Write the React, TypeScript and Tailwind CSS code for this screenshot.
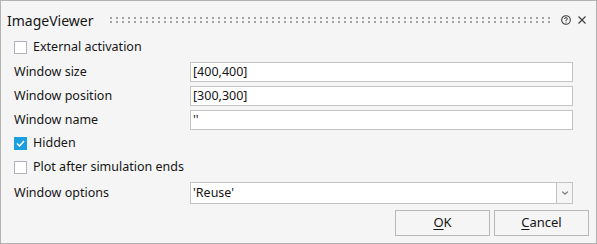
import React from 'react';

const font = "font-['Segoe_UI','Noto_Sans',Roboto,sans-serif]";

const CheckBox: React.FC<{ checked?: boolean; label: string }> = ({ checked, label }) => (
  <div className="flex items-center h-[24px]">
    {checked ? (
      <span className="w-[13px] h-[13px] bg-[#1aa0e0] flex items-center justify-center">
        <svg width="9" height="7" viewBox="0 0 9 7">
          <path d="M1 3.5 L3.5 6 L8 1" fill="none" stroke="#fff" strokeWidth="1.6" />
        </svg>
      </span>
    ) : (
      <span className="w-[13px] h-[13px] bg-white border border-[#aeb3bd]" />
    )}
    <span className="ml-[6px]">{label}</span>
  </div>
);

const Field: React.FC<{ label: string; value: string }> = ({ label, value }) => (
  <div className="flex items-center h-[24px] pt-[2px]">
    <span className="w-[176px]">{label}</span>
    <div className="flex-1 h-[20px] bg-white border border-[#c3c3c3] flex items-center px-[2px]">{value}</div>
  </div>
);

const App: React.FC = () => {
  return (
    <div className={`w-[597px] h-[244px] bg-[#f5f5f5] border border-[#b2b2b2] flex flex-col text-[12.5px] text-[#161616] ${font}`}>
      {/* Title bar */}
      <div className="h-[34px] flex items-center pl-[6px] pr-[10px] pt-[4px]">
        <span className="text-[14px]">ImageViewer</span>
        <div className="flex-1 ml-[16px] h-[6px]">
          <svg className="w-full h-[6px] block">
            <defs>
              <pattern id="grip" width="6" height="4" patternUnits="userSpaceOnUse">
                <rect x="0" y="0" width="2" height="2" fill="#a0a0a0" />
              </pattern>
            </defs>
            <rect x="0" y="0" width="100%" height="6" fill="url(#grip)" />
          </svg>
        </div>
        <svg className="ml-[8px]" width="10" height="10" viewBox="0 0 10 10">
          <circle cx="5" cy="5" r="4.3" fill="none" stroke="#3c3c3c" strokeWidth="1.1" />
          <path d="M3.6 4 Q3.6 2.6 5 2.6 Q6.4 2.6 6.4 3.8 Q6.4 4.6 5 5.2 L5 6" fill="none" stroke="#3c3c3c" strokeWidth="1" />
          <rect x="4.5" y="6.7" width="1" height="1" fill="#3c3c3c" />
        </svg>
        <svg className="ml-[7px]" width="8" height="8" viewBox="0 0 8 8">
          <path d="M0.5 0.5 L7.5 7.5 M7.5 0.5 L0.5 7.5" stroke="#3c3c3c" strokeWidth="1.1" />
        </svg>
      </div>

      {/* Form */}
      <div className="pl-[13px] pr-[23px] flex flex-col">
        <CheckBox label="External activation" />
        <Field label="Window size" value="[400,400]" />
        <Field label="Window position" value="[300,300]" />
        <Field label="Window name" value="''" />
        <CheckBox checked label="Hidden" />
        <CheckBox label="Plot after simulation ends" />
        <div className="flex items-center h-[26px] pt-[2px]">
          <span className="w-[176px]">Window options</span>
          <div className="flex-1 h-[22px] flex">
            <div className="flex-1 bg-white border border-[#c3c3c3] flex items-center px-[2px]">'Reuse'</div>
            <div className="w-[16px] border border-l-0 border-[#c3c3c3] flex items-center justify-center">
              <svg width="6" height="4" viewBox="0 0 6 4">
                <path d="M0 0 L3 2 L6 0 L6 1.5 L3 4 L0 1.5 Z" fill="#8a8a8a" />
              </svg>
            </div>
          </div>
        </div>
      </div>

      {/* Buttons */}
      <div className="flex justify-end gap-[4px] pr-[7px] mt-[5px]">
        <button className="w-[95px] h-[26px] bg-[#f5f5f5] border border-[#b7b7b7] text-[13px]">
          <span className="underline underline-offset-2">O</span>K
        </button>
        <button className="w-[95px] h-[26px] bg-[#f5f5f5] border border-[#b7b7b7] text-[13px]">
          <span className="underline underline-offset-2">C</span>ancel
        </button>
      </div>
    </div>
  );
};

export default App;
